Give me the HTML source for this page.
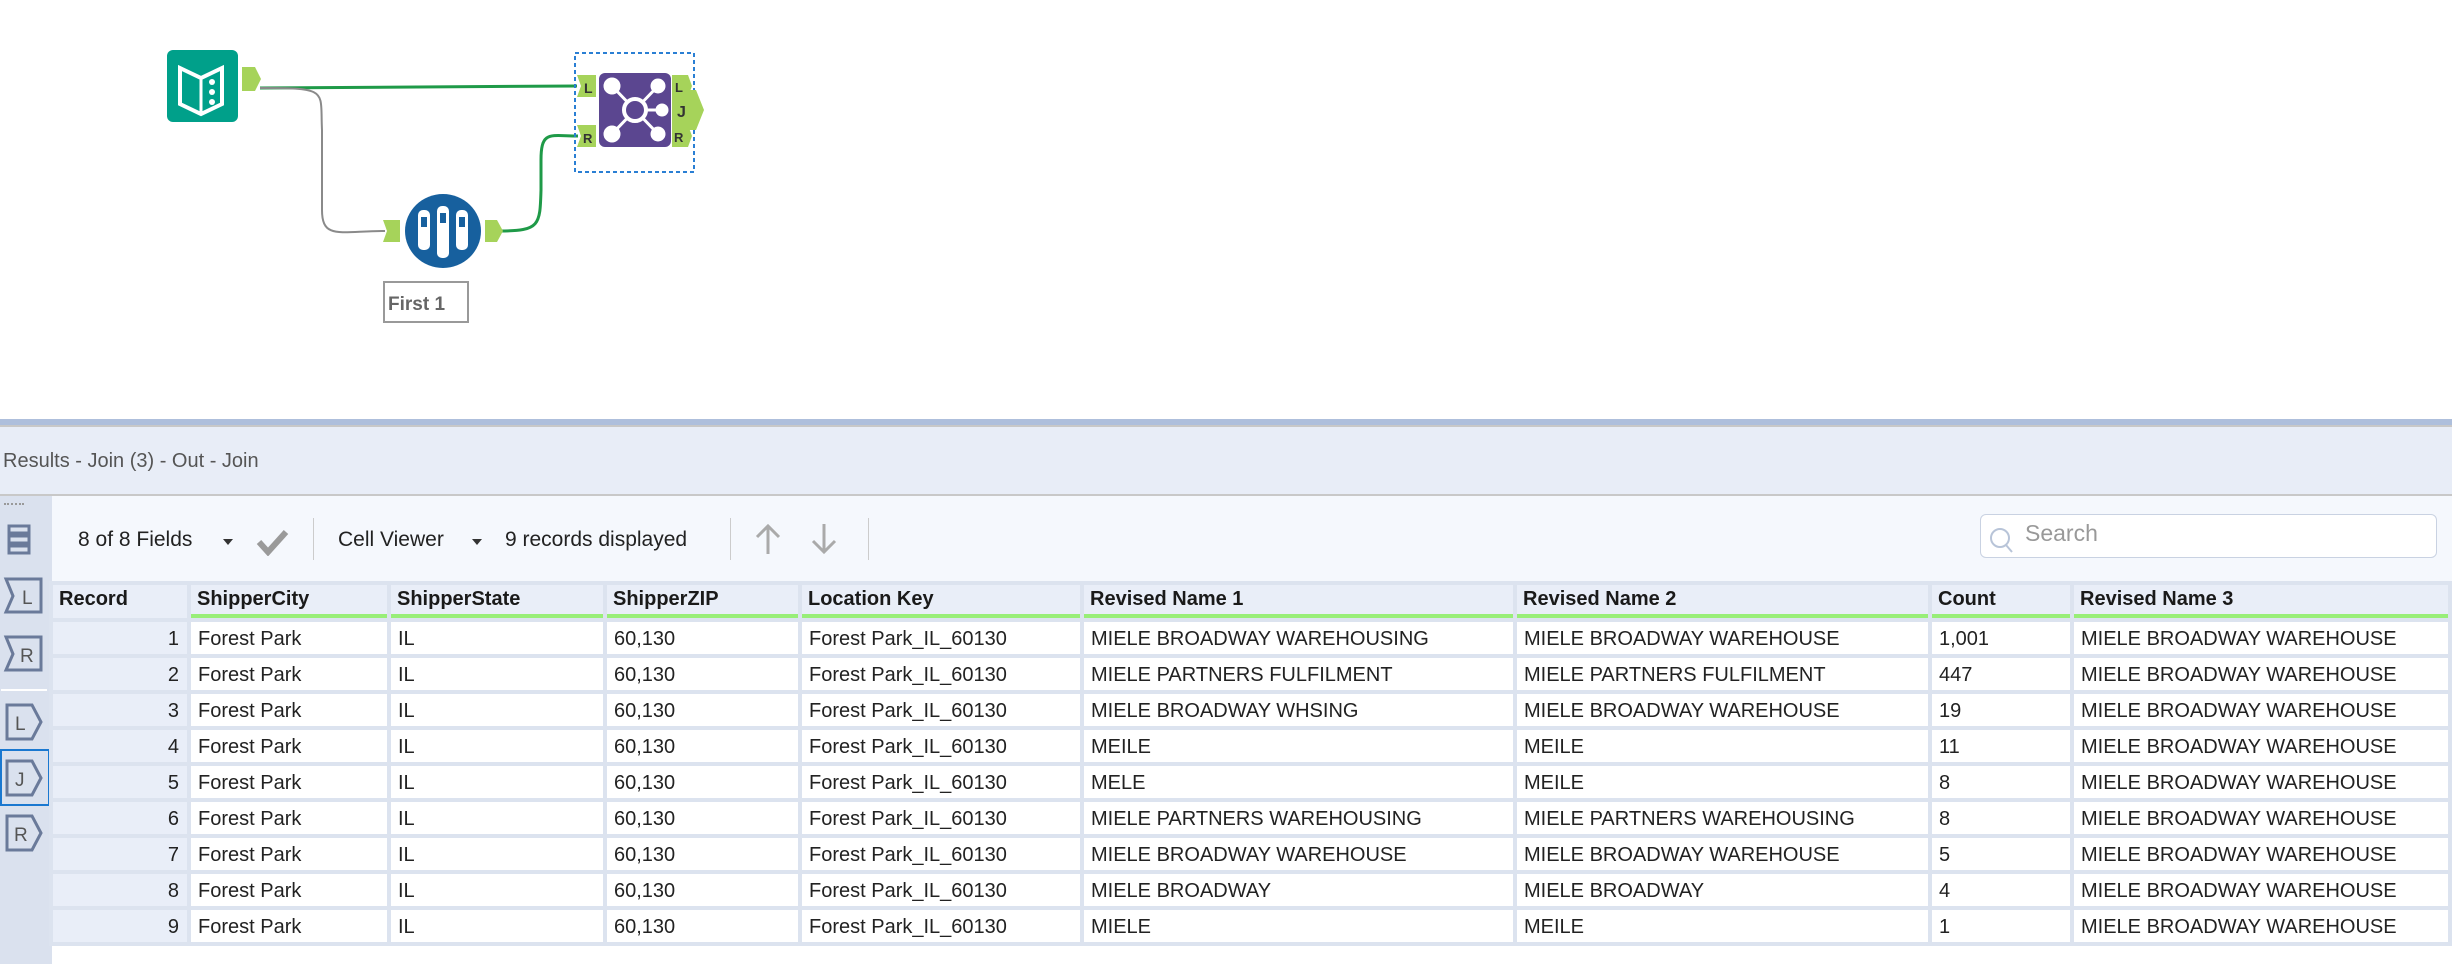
<!DOCTYPE html>
<html><head><meta charset="utf-8"><style>
*{margin:0;padding:0;box-sizing:border-box}
body{width:2452px;height:964px;position:relative;overflow:hidden;background:#fff;font-family:"Liberation Sans",sans-serif;color:#1e1e1e}
.a{position:absolute}
table{position:absolute;left:53px;top:581px;border-collapse:separate;border-spacing:4px;table-layout:fixed;background:#dce3ef;margin-left:-4px}
td{font-size:20px;white-space:nowrap;overflow:hidden;height:32px;padding:2px 0 0 7px;background:#fff;color:#222}
th{font-size:20px;font-weight:bold;text-align:left;height:33px;padding:0 0 0 6px;background:#e9eef8;border-bottom:4px solid #98ee78;color:#1a1a1a}
th.r{border-bottom:4px solid #e9eef8}
td.r{background:#e9eef8;text-align:right;padding-right:8px}
.tb{font-size:21px;color:#222}
</style></head><body>
<svg class="a" style="left:0;top:0" width="2452" height="419">
<path d="M260 88 L577 86" stroke="#1f9a48" stroke-width="3" fill="none"/>
<path d="M260 88 C330 88 320 90 322 130 L322 210 C322 240 340 231 385 231" stroke="#8a8a8a" stroke-width="2" fill="none"/>
<path d="M500 231 C540 231 540 225 541 190 L541 160 C541 130 550 136 578 136" stroke="#1f9a48" stroke-width="3" fill="none"/>
<rect x="167" y="50" width="71" height="72" rx="6" fill="#00a08a"/>
<path d="M180 68 L201 78 L222 68 L222 104 L201 114 L180 104 Z" fill="none" stroke="#fff" stroke-width="4"/>
<path d="M201 78 L201 112" stroke="#fff" stroke-width="3"/>
<circle cx="212" cy="82" r="3" fill="#fff"/><circle cx="212" cy="92" r="3" fill="#fff"/><circle cx="212" cy="102" r="3" fill="#fff"/>
<path d="M242 67 L255 67 L261 79 L255 91 L242 91 Z" fill="#a6d35a"/>
<rect x="575" y="53" width="119" height="119" fill="none" stroke="#2a7fd4" stroke-width="2" stroke-dasharray="4 3"/>
<rect x="599" y="73" width="72" height="74" rx="6" fill="#5b4690"/>
<g fill="#fff" stroke="#fff" stroke-width="3"><line x1="635" y1="110" x2="612" y2="86"/><line x1="635" y1="110" x2="658" y2="86"/><line x1="635" y1="110" x2="612" y2="134"/><line x1="635" y1="110" x2="658" y2="134"/><line x1="635" y1="110" x2="662" y2="110"/>
<circle cx="612" cy="86" r="7"/><circle cx="658" cy="86" r="6"/><circle cx="612" cy="134" r="7"/><circle cx="658" cy="134" r="6"/><circle cx="662" cy="110" r="5"/></g>
<circle cx="635" cy="110" r="11" fill="#5b4690" stroke="#fff" stroke-width="4"/>
<path d="M577 75 L596 75 L596 97 L577 97 L581 86 Z" fill="#a6d35a"/><text x="584" y="93" font-size="14" font-weight="bold" fill="#333">L</text>
<path d="M577 125 L596 125 L596 147 L577 147 L581 136 Z" fill="#a6d35a"/><text x="583" y="143" font-size="13" font-weight="bold" fill="#333">R</text>
<path d="M672 90 L696 90 L704 110 L696 130 L672 130 Z" fill="#a6d35a"/><text x="677" y="117" font-size="16" font-weight="bold" fill="#333">J</text>
<path d="M672 75 L688 75 L692 86 L688 97 L672 97 Z" fill="#a6d35a"/><text x="675" y="92" font-size="13" font-weight="bold" fill="#333">L</text>
<path d="M672 125 L688 125 L692 136 L688 147 L672 147 Z" fill="#a6d35a"/><text x="674" y="142" font-size="13" font-weight="bold" fill="#333">R</text>
<ellipse cx="443" cy="231" rx="38" ry="37" fill="#17609e"/>
<g fill="#fff"><rect x="418" y="210" width="12" height="40" rx="5"/><rect x="437" y="206" width="12" height="52" rx="5"/><rect x="456" y="210" width="12" height="40" rx="5"/></g>
<g fill="#17609e"><rect x="421" y="217" width="6" height="10"/><rect x="440" y="213" width="6" height="10"/><rect x="459" y="217" width="6" height="10"/></g>
<path d="M383 220 L400 220 L400 242 L383 242 L387 231 Z" fill="#a6d35a"/>
<path d="M485 220 L497 220 L503 231 L497 242 L485 242 Z" fill="#a6d35a"/>
<rect x="384" y="282" width="84" height="40" fill="#fff" stroke="#999" stroke-width="2"/>
<text x="388" y="310" font-size="19" font-weight="bold" fill="#666">First 1</text>
</svg>
<div class="a" style="left:0;top:419px;width:2452px;height:6px;background:#aebfdc"></div>
<div class="a" style="left:0;top:425px;width:2452px;height:2px;background:#c8c8c8"></div>
<div class="a" style="left:0;top:427px;width:2452px;height:67px;background:#e8edf7"></div>
<div class="a" style="left:3px;top:450px;font-size:20px;color:#555">Results - Join (3) - Out - Join</div>
<div class="a" style="left:0;top:494px;width:2452px;height:2px;background:#c8c8c8"></div>
<div class="a" style="left:0;top:496px;width:52px;height:468px;background:#dae1ee"></div>
<div class="a" style="left:52px;top:496px;width:2400px;height:85px;background:#f5f8fd"></div>
<div class="a" style="left:52px;top:943px;width:2400px;height:21px;background:#fff"></div>
<div class="a" style="left:4px;top:503px;width:20px;border-top:2px dotted #999"></div>
<svg class="a" style="left:0;top:496px" width="52" height="468">
<g fill="none" stroke="#6a7a9a" stroke-width="3">
<rect x="9" y="30" width="20" height="7"/><rect x="9" y="40" width="20" height="7"/><rect x="9" y="50" width="20" height="7"/>
<path d="M6 83 L41 83 L41 116 L6 116 L13 100 Z"/>
<path d="M6 141 L41 141 L41 174 L6 174 L13 158 Z"/>
<path d="M7 209 L32 209 L41 226 L32 243 L7 243 Z"/>
<path d="M7 265 L32 265 L41 282 L32 299 L7 299 Z"/>
<path d="M7 320 L32 320 L41 337 L32 354 L7 354 Z"/>
</g>
<line x1="1" y1="194" x2="47" y2="194" stroke="#fff" stroke-width="2"/>
<rect x="1" y="254" width="48" height="55" fill="none" stroke="#1a78d0" stroke-width="2"/>
<g font-size="19" fill="#555" font-family="Liberation Sans"><text x="22" y="108">L</text><text x="20" y="166">R</text><text x="15" y="234">L</text><text x="15" y="290">J</text><text x="14" y="345">R</text></g>
</svg>
<div class="a tb" style="left:78px;top:528px">8 of 8 Fields</div>
<div class="a" style="left:223px;top:539px;border:5px solid transparent;border-top:6px solid #333"></div>
<svg class="a" style="left:256px;top:528px" width="34" height="28"><path d="M3 14 L12 24 L30 4" stroke="#9a9a9a" stroke-width="6" fill="none"/></svg>
<div class="a" style="left:313px;top:518px;width:1px;height:42px;background:#ccc"></div>
<div class="a tb" style="left:338px;top:528px">Cell Viewer</div>
<div class="a" style="left:472px;top:539px;border:5px solid transparent;border-top:6px solid #333"></div>
<div class="a tb" style="left:505px;top:528px">9 records displayed</div>
<div class="a" style="left:730px;top:518px;width:1px;height:42px;background:#ccc"></div>
<svg class="a" style="left:752px;top:522px" width="100" height="34"><g stroke="#aaa" stroke-width="3" fill="none"><path d="M16 32 L16 4 M5 15 L16 4 L27 15"/><path d="M72 2 L72 30 M61 19 L72 30 L83 19"/></g></svg>
<div class="a" style="left:868px;top:518px;width:1px;height:42px;background:#ccc"></div>
<div class="a" style="left:1980px;top:514px;width:457px;height:44px;background:#fff;border:1.5px solid #c9d2e2;border-radius:6px"></div>
<svg class="a" style="left:1987px;top:524px" width="30" height="32"><circle cx="13" cy="14" r="9" stroke="#b8c4d8" stroke-width="2" fill="none"/><path d="M19 21 L25 28" stroke="#b8c4d8" stroke-width="2"/></svg>
<div class="a" style="left:2025px;top:520px;font-size:23px;color:#999">Search</div>
<table>
<colgroup><col style="width:134px"><col style="width:196px"><col style="width:212px"><col style="width:191px"><col style="width:278px"><col style="width:429px"><col style="width:411px"><col style="width:138px"><col style="width:374px"></colgroup>
<tr><th class="r">Record</th><th>ShipperCity</th><th>ShipperState</th><th>ShipperZIP</th><th>Location Key</th><th>Revised Name 1</th><th>Revised Name 2</th><th>Count</th><th>Revised Name 3</th></tr>
<tr><td class="r">1</td><td>Forest Park</td><td>IL</td><td>60,130</td><td>Forest Park_IL_60130</td><td>MIELE BROADWAY WAREHOUSING</td><td>MIELE BROADWAY WAREHOUSE</td><td>1,001</td><td>MIELE BROADWAY WAREHOUSE</td></tr>
<tr><td class="r">2</td><td>Forest Park</td><td>IL</td><td>60,130</td><td>Forest Park_IL_60130</td><td>MIELE PARTNERS FULFILMENT</td><td>MIELE PARTNERS FULFILMENT</td><td>447</td><td>MIELE BROADWAY WAREHOUSE</td></tr>
<tr><td class="r">3</td><td>Forest Park</td><td>IL</td><td>60,130</td><td>Forest Park_IL_60130</td><td>MIELE BROADWAY WHSING</td><td>MIELE BROADWAY WAREHOUSE</td><td>19</td><td>MIELE BROADWAY WAREHOUSE</td></tr>
<tr><td class="r">4</td><td>Forest Park</td><td>IL</td><td>60,130</td><td>Forest Park_IL_60130</td><td>MEILE</td><td>MEILE</td><td>11</td><td>MIELE BROADWAY WAREHOUSE</td></tr>
<tr><td class="r">5</td><td>Forest Park</td><td>IL</td><td>60,130</td><td>Forest Park_IL_60130</td><td>MELE</td><td>MEILE</td><td>8</td><td>MIELE BROADWAY WAREHOUSE</td></tr>
<tr><td class="r">6</td><td>Forest Park</td><td>IL</td><td>60,130</td><td>Forest Park_IL_60130</td><td>MIELE PARTNERS WAREHOUSING</td><td>MIELE PARTNERS WAREHOUSING</td><td>8</td><td>MIELE BROADWAY WAREHOUSE</td></tr>
<tr><td class="r">7</td><td>Forest Park</td><td>IL</td><td>60,130</td><td>Forest Park_IL_60130</td><td>MIELE BROADWAY WAREHOUSE</td><td>MIELE BROADWAY WAREHOUSE</td><td>5</td><td>MIELE BROADWAY WAREHOUSE</td></tr>
<tr><td class="r">8</td><td>Forest Park</td><td>IL</td><td>60,130</td><td>Forest Park_IL_60130</td><td>MIELE BROADWAY</td><td>MIELE BROADWAY</td><td>4</td><td>MIELE BROADWAY WAREHOUSE</td></tr>
<tr><td class="r">9</td><td>Forest Park</td><td>IL</td><td>60,130</td><td>Forest Park_IL_60130</td><td>MIELE</td><td>MEILE</td><td>1</td><td>MIELE BROADWAY WAREHOUSE</td></tr>
</table>
</body></html>
